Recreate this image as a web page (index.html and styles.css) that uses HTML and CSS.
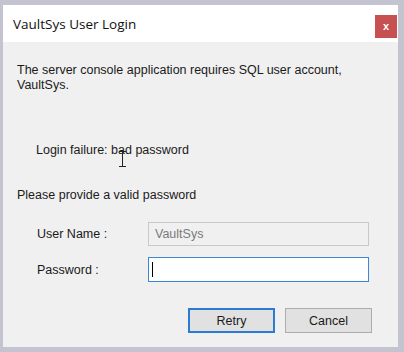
FILE: index.html
```html
<!DOCTYPE html>
<html lang="en">
<head>
  <meta charset="UTF-8" />
  <title>VaultSys User Login</title>
  <link rel="stylesheet" href="styles.css">
</head>
<body>
  <div class="window">
    <div class="titlebar">
      <span class="title">VaultSys User Login</span>
      <button class="close-btn">x</button>
    </div>

    <div class="content">
      <p class="intro">The server console application requires SQL user account, VaultSys.</p>

      <p class="error">Login failure: bad password<span class="ibeam"></span></p>

      <p class="prompt">Please provide a valid password</p>

      <div class="form-row">
        <label>User Name :</label>
        <div class="field disabled">VaultSys</div>
      </div>
      <div class="form-row">
        <label>Password :</label>
        <div class="field active"><span class="caret"></span></div>
      </div>

      <div class="buttons">
        <button class="btn default">Retry</button>
        <button class="btn">Cancel</button>
      </div>
    </div>
  </div>
</body>
</html>
```

FILE: styles.css
```css
body {
  margin: 0;
  padding: 5px 6px 5px 3px;
  background: #c4c4d0;
  font-family: 'Liberation Sans', Arial, sans-serif;
  font-size: 12.5px;
  color: #1a1a1a;
}

.window {
  width: 395px;
  height: 342px;
  background: #f0f0f0;
  display: flex;
  flex-direction: column;
}

.titlebar {
  height: 37px;
  background: #fff;
  display: flex;
  align-items: flex-start;
  justify-content: space-between;
}

.title {
  font-family: 'Open Sans', sans-serif;
  font-size: 13.5px;
  color: #111;
  margin: 10px 0 0 10px;
}

.close-btn {
  width: 22px;
  height: 23px;
  margin: 10px 1px 0 0;
  background: #c75050;
  color: #fff;
  border: none;
  font-family: 'Liberation Sans', sans-serif;
  font-size: 11px;
  font-weight: 700;
  padding: 0 0 2px;
}

.content {
  padding: 0 0 0 14px;
}

.intro {
  margin: 21px 40px 0 0;
  line-height: 15px;
}

.error {
  margin: 50px 0 0 19px;
  position: relative;
}

/* mouse pointer sitting over the message */
.ibeam {
  position: absolute;
  left: 83px;
  top: 8px;
  width: 7px;
  height: 16px;
  border-top: 1px solid #222;
  border-bottom: 1px solid #222;
  box-sizing: border-box;
}

.ibeam::after {
  content: "";
  position: absolute;
  left: 3px;
  top: 0;
  width: 1px;
  height: 14px;
  background: #222;
}

.prompt {
  margin: 31px 0 0 0;
}

.form-row {
  display: flex;
  align-items: center;
  margin-top: 11px;
}

.form-row:first-of-type {
  margin-top: 20px;
}

.form-row label {
  width: 111px;
  padding-left: 20px;
}

.field {
  width: 221px;
  height: 24px;
  box-sizing: border-box;
  padding: 4px 6px;
  border: 1px solid #c8c8c8;
}

.field.disabled {
  background: #f0f0f0;
  color: #7a7a7a;
}

.field.active {
  height: 25px;
  background: #fff;
  border-color: #3d86d8;
  padding: 4px 3px;
}

.caret {
  display: block;
  width: 1px;
  height: 15px;
  background: #000;
}

.buttons {
  display: flex;
  gap: 10px;
  margin: 26px 0 0 171px;
}

.btn {
  width: 87px;
  height: 25px;
  background: #e1e1e1;
  border: 1px solid #adadad;
  font-family: 'Liberation Sans', Arial, sans-serif;
  font-size: 12.5px;
  color: #1a1a1a;
}

.btn.default {
  border: 2px solid #2b7bd3;
}
```
